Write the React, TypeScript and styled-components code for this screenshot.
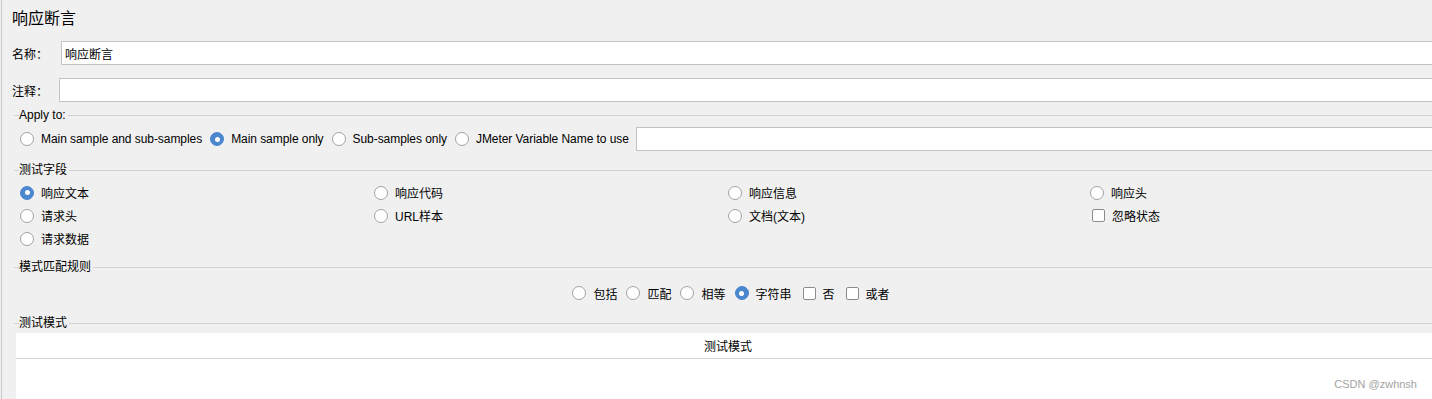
import React from "react";
import styled, { createGlobalStyle } from "styled-components";

const GlobalStyle = createGlobalStyle`
  html, body {
    margin: 0;
    padding: 0;
    background: #f0f0f0;
    overflow: hidden;
  }
  body {
    font-family: "Liberation Sans", "Noto Sans CJK SC", sans-serif;
    font-size: 12px;
    color: #000;
  }
`;

// Outer frame = the visible window
const Viewport = styled.div`
  position: relative;
  width: 1432px;
  height: 399px;
  overflow: hidden;
  background: #f0f0f0;
`;

// The panel is a bit wider than the window, as in the original
const Panel = styled.div`
  box-sizing: border-box;
  width: 1439px;
  height: 399px;
  margin-left: 1px;
  padding-left: 10px;
  border-left: 1px solid #c9c9c9;
`;

const Title = styled.div`
  height: 36px;
  line-height: 37px;
  font-size: 16px;
`;

const FieldRow = styled.div<{ $top: number }>`
  display: flex;
  align-items: center;
  height: 24px;
  margin-top: ${(p) => p.$top}px;
`;

const FieldLabel = styled.label<{ $w: number }>`
  flex-shrink: 0;
  width: ${(p) => p.$w}px;
`;

const TextInput = styled.input`
  flex: 1;
  min-width: 0;
  box-sizing: border-box;
  height: 24px;
  margin: 0;
  padding: 0 3px;
  border: 1px solid #c3c3c3;
  background: #fff;
  font: inherit;
  color: #000;
  outline: none;
`;

const Group = styled.section<{ $top: number }>`
  margin-top: ${(p) => p.$top}px;
  margin-left: 2px;
`;

const GroupHeader = styled.div`
  display: flex;
  align-items: center;
  height: 15px;

  &::before {
    content: "";
    width: 5px;
    height: 1px;
    background: #d2d2d2;
  }
  &::after {
    content: "";
    flex: 1;
    height: 1px;
    background: #d2d2d2;
  }
`;

const Legend = styled.span`
  padding-right: 2px;
  line-height: 15px;
`;

const GroupBody = styled.div<{ $top: number }>`
  margin-top: ${(p) => p.$top}px;
  padding-left: 2px;
`;

const ApplyRow = styled.div`
  display: flex;
  align-items: center;
  gap: 8px;
  height: 24px;
  padding-left: 4px;
  letter-spacing: -0.06px;
`;

const Option = styled.label`
  display: inline-flex;
  align-items: center;
  gap: 7px;
  white-space: nowrap;
`;

const RadioDot = styled.span<{ $on?: boolean }>`
  position: relative;
  box-sizing: border-box;
  width: 14px;
  height: 14px;
  border-radius: 50%;
  border: 1px solid ${(p) => (p.$on ? "#4a87cf" : "#a2a2a2")};
  background: ${(p) => (p.$on ? "#4a87cf" : "#fff")};

  &::after {
    content: "";
    display: ${(p) => (p.$on ? "block" : "none")};
    position: absolute;
    left: 50%;
    top: 50%;
    width: 5px;
    height: 5px;
    margin: -2.5px 0 0 -2.5px;
    border-radius: 50%;
    background: #fff;
  }
`;

const CheckBox = styled.span`
  box-sizing: border-box;
  width: 13px;
  height: 13px;
  margin-left: 2px;
  border: 1px solid #8c8c8c;
  border-radius: 2px;
  background: #fff;
`;

const VarInput = styled(TextInput)`
  margin-left: -1px;
`;

const FieldGrid = styled.div`
  display: grid;
  grid-template-columns: 354px 354px 362px 1fr;
  grid-auto-rows: 23px;
  align-items: center;
  padding-left: 4px;
`;

const PatternRow = styled.div`
  display: flex;
  justify-content: center;
  align-items: center;
  gap: 9px;
  height: 24px;
  padding-left: 6px;
`;

const ModeTable = styled.div`
  height: 80px;
  background: #fff;
`;

const ModeHead = styled.div`
  display: flex;
  align-items: center;
  justify-content: center;
  height: 25px;
  border-bottom: 1px solid #d6d6d6;
`;

const Watermark = styled.div`
  position: absolute;
  right: 15px;
  bottom: 9px;
  font-family: "Liberation Sans", Arial, sans-serif;
  font-size: 11px;
  color: #a3a3a3;
`;

const Radio = ({ label, on }: { label: string; on?: boolean }) => (
  <Option>
    <RadioDot $on={on} />
    {label}
  </Option>
);

const Check = ({ label }: { label: string }) => (
  <Option>
    <CheckBox />
    {label}
  </Option>
);

const App: React.FC = () => {
  return (
    <Viewport>
      <GlobalStyle />
      <Panel>
        <Title>响应断言</Title>

        <FieldRow $top={5}>
          <FieldLabel $w={49}>名称：</FieldLabel>
          <TextInput defaultValue="响应断言" />
        </FieldRow>
        <FieldRow $top={13}>
          <FieldLabel $w={47}>注释：</FieldLabel>
          <TextInput defaultValue="" />
        </FieldRow>

        <Group $top={6}>
          <GroupHeader>
            <Legend>Apply to:</Legend>
          </GroupHeader>
          <GroupBody $top={4}>
            <ApplyRow>
              <Radio label="Main sample and sub-samples" />
              <Radio label="Main sample only" on />
              <Radio label="Sub-samples only" />
              <Radio label="JMeter Variable Name to use" />
              <VarInput defaultValue="" />
            </ApplyRow>
          </GroupBody>
        </Group>

        <Group $top={12}>
          <GroupHeader>
            <Legend>测试字段</Legend>
          </GroupHeader>
          <GroupBody $top={3}>
            <FieldGrid>
              <Radio label="响应文本" on />
              <Radio label="响应代码" />
              <Radio label="响应信息" />
              <Radio label="响应头" />
              <Radio label="请求头" />
              <Radio label="URL样本" />
              <Radio label="文档(文本)" />
              <Check label="忽略状态" />
              <Radio label="请求数据" />
            </FieldGrid>
          </GroupBody>
        </Group>

        <Group $top={10}>
          <GroupHeader>
            <Legend>模式匹配规则</Legend>
          </GroupHeader>
          <GroupBody $top={6}>
            <PatternRow>
              <Radio label="包括" />
              <Radio label="匹配" />
              <Radio label="相等" />
              <Radio label="字符串" on />
              <Check label="否" />
              <Check label="或者" />
            </PatternRow>
          </GroupBody>
        </Group>

        <Group $top={11}>
          <GroupHeader>
            <Legend>测试模式</Legend>
          </GroupHeader>
          <GroupBody $top={2}>
            <ModeTable>
              <ModeHead>测试模式</ModeHead>
            </ModeTable>
          </GroupBody>
        </Group>
      </Panel>
      <Watermark>CSDN @zwhnsh</Watermark>
    </Viewport>
  );
};

export default App;
